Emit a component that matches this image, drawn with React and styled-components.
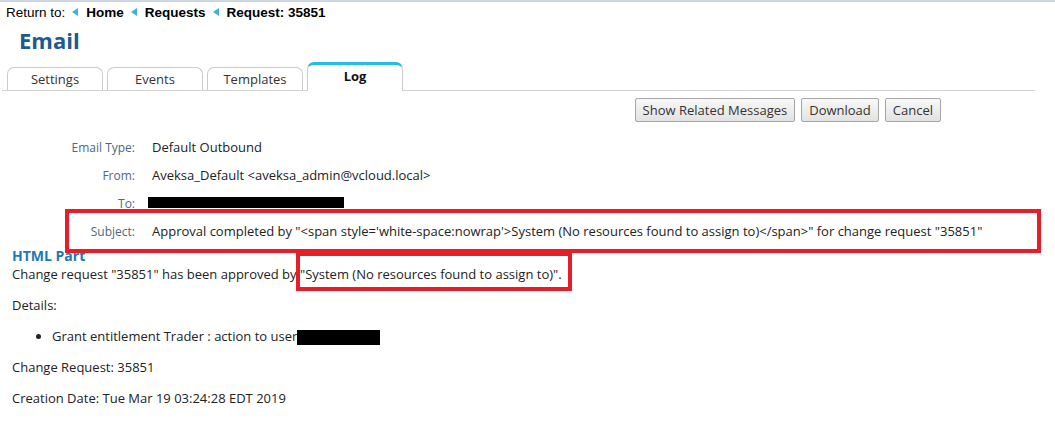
import React from 'react';
import styled, { createGlobalStyle, css } from 'styled-components';

const GlobalStyle = createGlobalStyle`
  html, body {
    margin: 0;
    padding: 0;
    background: #fff;
  }
  body {
    font-family: 'Open Sans', 'Liberation Sans', sans-serif;
    font-size: 13px;
    color: #222;
  }
`;

const Page = styled.div`
  width: 1055px;
  height: 429px;
  overflow: hidden;
  border-top: 2px solid #cdd5e2;
  box-sizing: border-box;
`;

const Breadcrumb = styled.div`
  display: flex;
  align-items: center;
  gap: 7px;
  height: 18px;
  padding: 1px 6px 0;
  font-family: 'Liberation Sans', Arial, sans-serif;
  font-size: 13.5px;
  color: #000;
`;

const Crumb = styled.span`
  display: inline-flex;
  align-items: center;
  gap: 8px;
  font-weight: bold;
`;

const Arrow = styled.span`
  width: 0;
  height: 0;
  border-top: 4px solid transparent;
  border-bottom: 4px solid transparent;
  border-right: 6px solid #38b3e3;
`;

const Title = styled.h1`
  margin: 5px 0 0 19px;
  font-size: 22px;
  line-height: 28px;
  font-weight: bold;
  color: #1d5a92;
`;

const TabBar = styled.div`
  display: flex;
  align-items: flex-end;
  gap: 4px;
  height: 28px;
  margin: 8px 20px 0 2px;
  padding-left: 5px;
  border-bottom: 1px solid #d2d2d2;
`;

const Tab = styled.div`
  box-sizing: border-box;
  width: 96px;
  height: 23px;
  display: flex;
  align-items: center;
  justify-content: center;
  padding-bottom: 1px;
  border: 1px solid #cacaca;
  border-bottom: none;
  border-radius: 7px 7px 0 0;
  background: #fff;
  color: #333;
  font-size: 13px;
  ${({ $active }) =>
    $active &&
    css`
      height: 29px;
      margin-bottom: -1px;
      padding-bottom: 5px;
      border-top: 3px solid #25bde6;
      font-weight: bold;
      color: #111;
    `}
`;

const Actions = styled.div`
  display: flex;
  justify-content: flex-end;
  gap: 6px;
  margin: 7px 114px 0 0;
`;

const Button = styled.button`
  height: 24px;
  padding: 0 7px;
  font-family: 'Open Sans', 'Liberation Sans', sans-serif;
  font-size: 13px;
  color: #333;
  background: linear-gradient(#f8f8f8, #e2e2e2);
  border: 1px solid #a6a6a6;
  border-radius: 2px;
`;

const Fields = styled.div`
  display: grid;
  grid-template-columns: 135px 1fr;
  column-gap: 17px;
  grid-auto-rows: 28px;
  align-items: center;
  margin-top: 11px;
`;

const Label = styled.div`
  text-align: right;
  font-size: 12px;
  color: #4d6883;
`;

const Value = styled.div`
  position: relative;
  color: #222;
  white-space: nowrap;
`;

const Redacted = styled.span`
  display: inline-block;
  width: ${({ $w }) => $w}px;
  height: ${({ $h }) => $h || 11}px;
  background: #000;
  vertical-align: middle;
`;

const Highlight = styled.span`
  position: absolute;
  pointer-events: none;
  border: 4px solid #e61e28;
  box-sizing: border-box;
`;

const SubjectBox = styled(Highlight)`
  left: -87px;
  right: 14px;
  top: -13px;
  bottom: -13px;
`;

const SubjectRow = styled.div`
  display: contents;
`;

const Body = styled.div`
  padding: 2px 12px 0;
  line-height: 18px;
  color: #222;

  p {
    margin: 13px 0;
  }
  ul {
    margin: 13px 0;
    padding-left: 40px;
  }
`;

const PartTitle = styled.div`
  font-size: 14px;
  font-weight: bold;
  color: #2278b5;
`;

const Marked = styled.span`
  position: relative;
`;

const InlineBox = styled(Highlight)`
  left: -4px;
  right: -10px;
  top: -13px;
  bottom: -8px;
`;

export default function App() {
  return (
    <>
      <GlobalStyle />
      <Page>
        <Breadcrumb>
          <span>Return to:</span>
          <Crumb><Arrow />Home</Crumb>
          <Crumb><Arrow />Requests</Crumb>
          <Crumb><Arrow />Request: 35851</Crumb>
        </Breadcrumb>

        <Title>Email</Title>

        <TabBar>
          <Tab>Settings</Tab>
          <Tab>Events</Tab>
          <Tab>Templates</Tab>
          <Tab $active>Log</Tab>
        </TabBar>

        <Actions>
          <Button>Show Related Messages</Button>
          <Button>Download</Button>
          <Button>Cancel</Button>
        </Actions>

        <Fields>
          <Label>Email Type:</Label>
          <Value>Default Outbound</Value>
          <Label>From:</Label>
          <Value>Aveksa_Default &lt;aveksa_admin@vcloud.local&gt;</Value>
          <Label>To:</Label>
          <Value><Redacted $w={196} $h={11} style={{ marginLeft: -4, marginTop: -4 }} /></Value>
          <SubjectRow>
            <Label>Subject:</Label>
            <Value>
              <SubjectBox />
              Approval completed by "&lt;span style='white-space:nowrap'&gt;System (No resources found to assign to)&lt;/span&gt;" for change request "35851"
            </Value>
          </SubjectRow>
        </Fields>

        <Body>
          <PartTitle>HTML Part</PartTitle>
          Change request "35851" has been approved by <Marked><InlineBox />"System (No resources found to assign to)".</Marked>
          <p>Details:</p>
          <ul>
            <li>Grant entitlement Trader : action to user<Redacted $w={83} $h={15} /></li>
          </ul>
          <p>Change Request: 35851</p>
          <p>Creation Date: Tue Mar 19 03:24:28 EDT 2019</p>
        </Body>
      </Page>
    </>
  );
}
